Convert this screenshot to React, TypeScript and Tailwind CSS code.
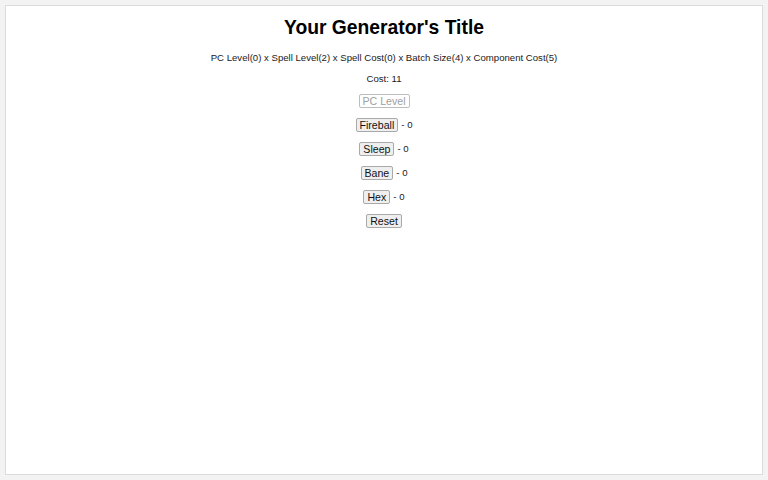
const SPELLS = [
  { name: "Fireball", count: 0 },
  { name: "Sleep", count: 0 },
  { name: "Bane", count: 0 },
  { name: "Hex", count: 0 },
];

const Btn = ({ label, disabled }: { label: string; disabled?: boolean }) => (
  <button
    disabled={disabled}
    className={`px-[3px] h-[14px] leading-[12px] text-[10.6px] rounded-[2px] border ${
      disabled
        ? "border-[#bdbdbd] bg-white text-[#a0a0a0]"
        : "border-[#a9a9a9] bg-[#efefef] text-[#111]"
    }`}
  >
    {label}
  </button>
);

export default function App() {
  return (
    <div className="h-[480px] bg-[#f3f3f3] p-[5px] font-['Liberation_Sans',Arial,sans-serif] text-[#1a1a1a]">
      <div className="h-full bg-white border border-[#dcdcdc] flex flex-col items-center text-[9.6px]">
        <h1 className="mt-[10px] text-[19.3px] font-bold leading-[24px] text-black">
          Your Generator's Title
        </h1>
        <p className="mt-[12px] leading-[12px]">
          PC Level(0) x Spell Level(2) x Spell Cost(0) x Batch Size(4) x
          Component Cost(5)
        </p>
        <p className="mt-[9px] leading-[12px]">Cost: 11</p>
        <div className="mt-[4px] flex flex-col items-center">
          <div className="h-[24px] flex items-center">
            <Btn label="PC Level" disabled />
          </div>
          {SPELLS.map((s) => (
            <div key={s.name} className="h-[24px] flex items-center gap-[3px]">
              <Btn label={s.name} />
              <span className="leading-[12px]">- {s.count}</span>
            </div>
          ))}
          <div className="h-[24px] flex items-center">
            <Btn label="Reset" />
          </div>
        </div>
      </div>
    </div>
  );
}
